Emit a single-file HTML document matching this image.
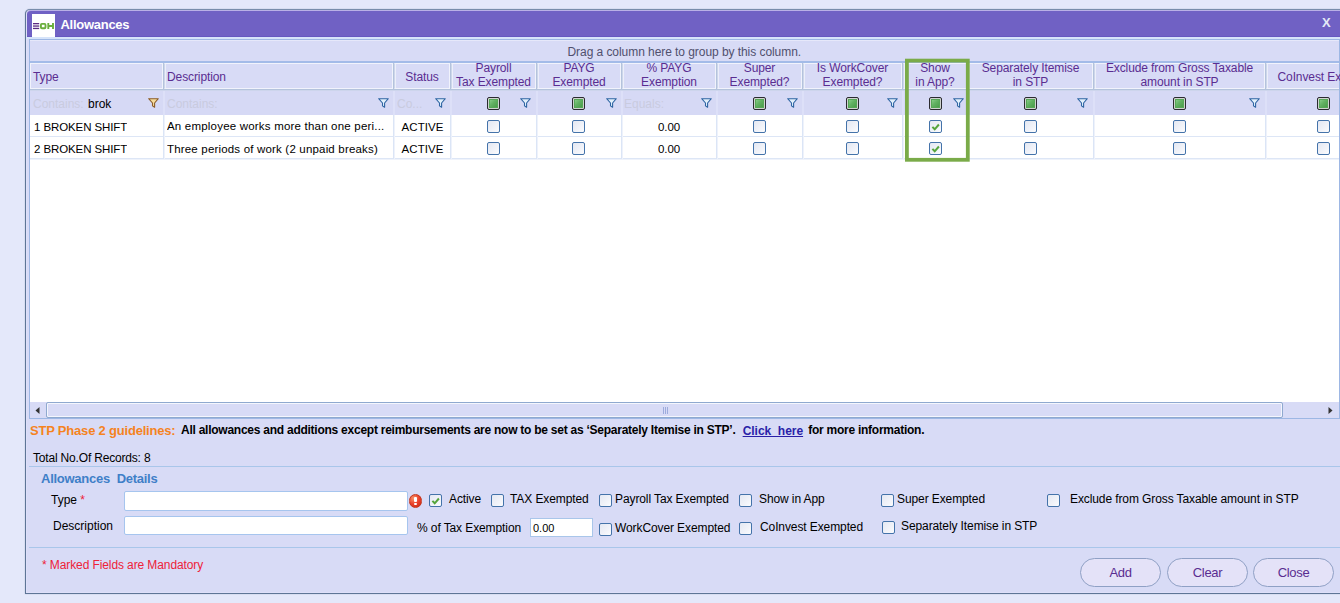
<!DOCTYPE html>
<html><head><meta charset="utf-8"><title>Allowances</title>
<style>
*{box-sizing:border-box;margin:0;padding:0}
html,body{width:1340px;height:603px;overflow:hidden}
body{background:#e4e8fa;font-family:"Liberation Sans",sans-serif;font-size:12px;color:#000;position:relative}
.abs{position:absolute}
#win{position:absolute;left:25px;top:9px;width:1320px;height:585px;border:1px solid #5e7596;border-top-color:#788dab;border-radius:5px 0 0 0;background:#d8dbf6;box-shadow:inset 0 0 0 1px #dee0f9,0 0 1px rgba(80,100,140,.7)}
#title{position:absolute;left:27px;top:10px;width:1316px;height:27px;background:#7061c4;border-radius:4px 0 0 0;border-top:1px solid #b9b0e6;border-bottom:1px solid #6558c0}
#tl{position:absolute;left:26px;top:37px;width:1314px;height:2px;background:#d6e4fa}
#title .t{position:absolute;left:33.5px;top:6px;font-size:13px;font-weight:bold;color:#fff;line-height:15px;letter-spacing:-0.28px}
#icon{position:absolute;left:32px;top:14px;width:23px;height:23px;background:#fff}
#grid{position:absolute;left:29px;top:39px;width:1311px;height:380px;border:1px solid #9db7e4;background:#fff}
#grp{position:absolute;left:30px;top:40px;width:1309px;height:21px;background:#d8dbf6;border-top:1px solid #e6e8fa;color:#50506e;line-height:23px;padding-left:537.5px;letter-spacing:-0.06px;white-space:nowrap;overflow:hidden}
#grpline{position:absolute;left:30px;top:61px;width:1309px;height:2px;background:#a3bbe8}
#hdr{position:absolute;left:30px;top:63px;width:1309px;height:28px;background:#b4c3dc;border-bottom:1px solid #cdd5ec}
.hc{position:absolute;top:63px;height:26px;border:1px solid #f1f3fc;border-left:1px solid #cdd6ea;box-shadow:inset 1px 0 0 #eceffa;color:#5a2d91;display:flex;flex-direction:column;justify-content:center;line-height:14px;white-space:nowrap;overflow:visible;letter-spacing:-0.1px;background:#d8dbf6}
.hc.c{text-align:center}
.hc.l{padding-left:2px}
#flt{position:absolute;left:30px;top:91px;width:1309px;height:24px;background:#d6d9f5}
.fc{position:absolute;top:92px;height:25px;line-height:25px;color:#c9cbdf;white-space:nowrap}
.fn{position:absolute;top:98px}
.row{position:absolute;left:30px;width:1309px;height:22px;background:#fff;border-bottom:1px solid #dde6f6;box-shadow:0 1px 0 #eff3fb}
.cell{position:absolute;height:22px;line-height:22px;white-space:nowrap;overflow:hidden;font-size:11.5px;letter-spacing:-0.1px}
.vs{position:absolute;top:115px;width:2px;height:44px;background:linear-gradient(90deg,#dbe5f6 0,#dbe5f6 50%,#eef2fb 50%,#eef2fb 100%)}
.fs{position:absolute;top:91px;width:2px;height:24px;background:#dde0f8}
.cb{position:absolute;width:13px;height:13px;border:1.35px solid #4473aa;border-radius:2px;background:linear-gradient(135deg,#e4e8f2 0%,#f1f3f9 60%,#fbfcfe 100%)}
.ib{position:absolute;width:13px;height:13px;border:1.2px solid #2b2b30;border-radius:2px;background:#cfd3cf}
.ib i{position:absolute;left:0.8px;top:0.8px;width:9px;height:9px;background:linear-gradient(135deg,#86cb86 0%,#62b162 45%,#4c9e4c 100%);border:1px solid #57a757}
</style></head><body>
<div id="win"></div>
<div id="title"><span class="t">Allowances</span></div>
<div id="tl"></div>
<div id="icon"><svg width="23" height="23" viewBox="0 0 23 23"><g fill="#5b2a82"><rect x="1" y="9" width="6.2" height="1.3"/><rect x="1" y="11.4" width="6.2" height="1.3"/><rect x="1" y="13.8" width="6.2" height="1.3"/></g><g fill="none" stroke="#6aae3c" stroke-width="1.9"><rect x="8.9" y="9.9" width="4.6" height="4.3" rx="1"/><path d="M16.3 9 V15.1 M21 9 V15.1 M16.3 12 H21"/></g></svg></div>
<div style="position:absolute;left:1322px;top:15px;color:#e4e9f6;font-size:13px;font-weight:bold;line-height:15px;width:30px">X</div>
<div id="grid"></div>
<div id="grp">Drag a column here to group by this column.</div>
<div id="grpline"></div>
<div id="hdr"></div>

<div class="hc l" style="left:30px;width:133px;border-left-color:#f1f3fc;box-shadow:none"><span style="position:relative;top:1px">Type</span></div>
<div class="hc l" style="left:164px;width:229px"><span style="position:relative;top:1px">Description</span></div>
<div class="hc c" style="left:394px;width:56px"><span style="position:relative;top:1px">Status</span></div>
<div class="hc c" style="left:451px;width:85px"><span style="position:relative;top:-1px">Payroll<br>Tax Exempted</span></div>
<div class="hc c" style="left:537px;width:84px"><span style="position:relative;top:-1px">PAYG<br>Exempted</span></div>
<div class="hc c" style="left:622px;width:94px"><span style="position:relative;top:-1px">% PAYG<br>Exemption</span></div>
<div class="hc c" style="left:717px;width:85px"><span style="position:relative;top:-1px">Super<br>Exempted?</span></div>
<div class="hc c" style="left:803px;width:99px"><span style="position:relative;top:-1px">Is WorkCover<br>Exempted?</span></div>
<div class="hc c" style="left:903px;width:64px"><span style="position:relative;top:-1px">Show<br>in App?</span></div>
<div class="hc c" style="left:968px;width:125px"><span style="position:relative;top:-1px">Separately Itemise<br>in STP</span></div>
<div class="hc c" style="left:1094px;width:171px"><span style="position:relative;top:-1px">Exclude from Gross Taxable<br>amount in STP</span></div>
<div class="hc l" style="left:1266px;width:73px;padding-left:10.5px;border-right:none"><span style="position:relative;top:1px">CoInvest Exempted?</span></div>
<div id="flt"></div>
<div class="fc" style="left:33px">Contains:</div><div class="fc" style="left:88px;color:#000">brok</div>
<svg class="fn" style="left:148px" width="11" height="10" viewBox="0 0 11 10"><path d="M0.7 0.7 H10.3 L6.6 5 V9.3 L4.5 7.9 V5 Z" fill="#f6dc9c" stroke="#8c5c28" stroke-width="1.1" stroke-linejoin="round"/></svg>
<div class="fc" style="left:167px">Contains:</div>
<svg class="fn" style="left:378px" width="11" height="10" viewBox="0 0 11 10"><path d="M0.7 0.7 H10.3 L6.6 5 V9.3 L4.5 7.9 V5 Z" fill="#e3f1fc" stroke="#2f65a3" stroke-width="1.1" stroke-linejoin="round"/></svg>
<div class="fc" style="left:397px">Co...</div>
<svg class="fn" style="left:435px" width="11" height="10" viewBox="0 0 11 10"><path d="M0.7 0.7 H10.3 L6.6 5 V9.3 L4.5 7.9 V5 Z" fill="#e3f1fc" stroke="#2f65a3" stroke-width="1.1" stroke-linejoin="round"/></svg>
<div class="ib" style="left:487px;top:97px"><i></i></div>
<svg class="fn" style="left:520px" width="11" height="10" viewBox="0 0 11 10"><path d="M0.7 0.7 H10.3 L6.6 5 V9.3 L4.5 7.9 V5 Z" fill="#e3f1fc" stroke="#2f65a3" stroke-width="1.1" stroke-linejoin="round"/></svg>
<div class="ib" style="left:572px;top:97px"><i></i></div>
<svg class="fn" style="left:606px" width="11" height="10" viewBox="0 0 11 10"><path d="M0.7 0.7 H10.3 L6.6 5 V9.3 L4.5 7.9 V5 Z" fill="#e3f1fc" stroke="#2f65a3" stroke-width="1.1" stroke-linejoin="round"/></svg>
<div class="fc" style="left:624px">Equals:</div>
<svg class="fn" style="left:701px" width="11" height="10" viewBox="0 0 11 10"><path d="M0.7 0.7 H10.3 L6.6 5 V9.3 L4.5 7.9 V5 Z" fill="#e3f1fc" stroke="#2f65a3" stroke-width="1.1" stroke-linejoin="round"/></svg>
<div class="ib" style="left:753px;top:97px"><i></i></div>
<svg class="fn" style="left:787px" width="11" height="10" viewBox="0 0 11 10"><path d="M0.7 0.7 H10.3 L6.6 5 V9.3 L4.5 7.9 V5 Z" fill="#e3f1fc" stroke="#2f65a3" stroke-width="1.1" stroke-linejoin="round"/></svg>
<div class="ib" style="left:846px;top:97px"><i></i></div>
<svg class="fn" style="left:887px" width="11" height="10" viewBox="0 0 11 10"><path d="M0.7 0.7 H10.3 L6.6 5 V9.3 L4.5 7.9 V5 Z" fill="#e3f1fc" stroke="#2f65a3" stroke-width="1.1" stroke-linejoin="round"/></svg>
<div class="ib" style="left:929px;top:97px"><i></i></div>
<svg class="fn" style="left:953px" width="11" height="10" viewBox="0 0 11 10"><path d="M0.7 0.7 H10.3 L6.6 5 V9.3 L4.5 7.9 V5 Z" fill="#e3f1fc" stroke="#2f65a3" stroke-width="1.1" stroke-linejoin="round"/></svg>
<div class="ib" style="left:1024px;top:97px"><i></i></div>
<svg class="fn" style="left:1077px" width="11" height="10" viewBox="0 0 11 10"><path d="M0.7 0.7 H10.3 L6.6 5 V9.3 L4.5 7.9 V5 Z" fill="#e3f1fc" stroke="#2f65a3" stroke-width="1.1" stroke-linejoin="round"/></svg>
<div class="ib" style="left:1173px;top:97px"><i></i></div>
<svg class="fn" style="left:1249px" width="11" height="10" viewBox="0 0 11 10"><path d="M0.7 0.7 H10.3 L6.6 5 V9.3 L4.5 7.9 V5 Z" fill="#e3f1fc" stroke="#2f65a3" stroke-width="1.1" stroke-linejoin="round"/></svg>
<div class="ib" style="left:1317px;top:97px"><i></i></div>
<div class="row" style="top:115px"></div>
<div class="cell" style="left:34px;top:115.5px">1 BROKEN SHIFT</div>
<div class="cell" style="left:167px;top:114.6px;width:226px;letter-spacing:0.2px">An employee works more than one peri...</div>
<div class="cell" style="left:394px;top:115.5px;width:57px;text-align:center;letter-spacing:0.05px">ACTIVE</div>
<div class="cell" style="left:622px;top:115.5px;width:94px;text-align:center">0.00</div>
<div class="cb" style="left:487px;top:120px"></div>
<div class="cb" style="left:572px;top:120px"></div>
<div class="cb" style="left:753px;top:120px"></div>
<div class="cb" style="left:846px;top:120px"></div>
<div class="cb" style="left:929px;top:120px"><svg style="position:absolute;left:1px;top:1px" width="9" height="9" viewBox="0 0 9 9"><path d="M1.4 4.9 L3.7 7.3 L7.9 2.5" fill="none" stroke="#55a53c" stroke-width="2"/></svg></div>
<div class="cb" style="left:1024px;top:120px"></div>
<div class="cb" style="left:1173px;top:120px"></div>
<div class="cb" style="left:1317px;top:120px"></div>
<div class="row" style="top:137px"></div>
<div class="cell" style="left:34px;top:137.5px">2 BROKEN SHIFT</div>
<div class="cell" style="left:167px;top:137.6px;width:226px;letter-spacing:0.18px">Three periods of work (2 unpaid breaks)</div>
<div class="cell" style="left:394px;top:137.5px;width:57px;text-align:center;letter-spacing:0.05px">ACTIVE</div>
<div class="cell" style="left:622px;top:137.5px;width:94px;text-align:center">0.00</div>
<div class="cb" style="left:487px;top:142px"></div>
<div class="cb" style="left:572px;top:142px"></div>
<div class="cb" style="left:753px;top:142px"></div>
<div class="cb" style="left:846px;top:142px"></div>
<div class="cb" style="left:929px;top:142px"><svg style="position:absolute;left:1px;top:1px" width="9" height="9" viewBox="0 0 9 9"><path d="M1.4 4.9 L3.7 7.3 L7.9 2.5" fill="none" stroke="#55a53c" stroke-width="2"/></svg></div>
<div class="cb" style="left:1024px;top:142px"></div>
<div class="cb" style="left:1173px;top:142px"></div>
<div class="cb" style="left:1317px;top:142px"></div>
<div class="vs" style="left:163px"></div><div class="fs" style="left:163px"></div>
<div class="vs" style="left:393px"></div><div class="fs" style="left:393px"></div>
<div class="vs" style="left:450px"></div><div class="fs" style="left:450px"></div>
<div class="vs" style="left:536px"></div><div class="fs" style="left:536px"></div>
<div class="vs" style="left:621px"></div><div class="fs" style="left:621px"></div>
<div class="vs" style="left:716px"></div><div class="fs" style="left:716px"></div>
<div class="vs" style="left:802px"></div><div class="fs" style="left:802px"></div>
<div class="vs" style="left:902px"></div><div class="fs" style="left:902px"></div>
<div class="vs" style="left:967px"></div><div class="fs" style="left:967px"></div>
<div class="vs" style="left:1093px"></div><div class="fs" style="left:1093px"></div>
<div class="vs" style="left:1265px"></div><div class="fs" style="left:1265px"></div>
<svg style="position:absolute;left:900px;top:55px" width="80" height="112" viewBox="0 0 80 112"><rect x="6.9" y="5.6" width="60.9" height="99.2" fill="none" stroke="#7aab49" stroke-width="3.8"/></svg>

<!-- scrollbar -->
<div style="position:absolute;left:30px;top:402px;width:1309px;height:16px;background:#d8dbf6"></div>
<div style="position:absolute;left:46px;top:402px;width:1237px;height:16px;background:#d8dbf6;border:1px solid #8fa9cf;border-radius:2px;box-shadow:inset 0 0 0 1px #f4f6fd"></div>
<div style="position:absolute;left:663px;top:407px;width:5px;height:7px;border-left:1px solid #9dabdc;border-right:1px solid #9dabdc"><div style="position:absolute;left:1px;top:0;width:1px;height:7px;background:#9dabdc"></div></div>
<svg style="position:absolute;left:35px;top:407px" width="5" height="7" viewBox="0 0 5 7"><path d="M4.5 0 V7 L0.5 3.5 Z" fill="#333"/></svg>
<svg style="position:absolute;left:1328px;top:407px" width="5" height="7" viewBox="0 0 5 7"><path d="M0.5 0 V7 L4.5 3.5 Z" fill="#333"/></svg>

<div class="abs" style="left:30px;top:422.5px;font-size:13px;font-weight:bold;color:#f5831f;line-height:16px;white-space:nowrap;letter-spacing:-0.2px">STP Phase 2 guidelines:</div>
<div class="abs" style="left:181px;top:423px;font-size:12px;font-weight:bold;color:#000;line-height:14px;white-space:nowrap;letter-spacing:-0.25px">All allowances and additions except reimbursements are now to be set as &lsquo;Separately Itemise in STP&rsquo;. <span style="color:#2a1fa8;text-decoration:underline;font-size:12px;margin:0 2px 0 4px;letter-spacing:-0.02px;position:relative;top:0.5px">Click&nbsp; here</span> for more information.</div>
<div class="abs" style="left:33px;top:451px;line-height:14px;white-space:nowrap;letter-spacing:-0.18px">Total No.Of Records: 8</div>
<div class="abs" style="left:29px;top:466px;width:1311px;height:1px;background:#a9c6ea"></div>
<div class="abs" style="left:41px;top:471px;font-size:13px;font-weight:bold;color:#3f7fc8;line-height:16px;white-space:nowrap;letter-spacing:-0.26px">Allowances&nbsp; Details</div>

<div class="abs" style="left:51px;top:493px;line-height:14px;white-space:nowrap">Type <span style="color:#ee2238">*</span></div>
<div class="abs" style="left:124px;top:491px;width:284px;height:20px;background:#fff;border:1px solid #a6c5ee;border-radius:2px"></div>
<div class="abs" style="left:53px;top:519px;line-height:14px;white-space:nowrap">Description</div>
<div class="abs" style="left:124px;top:516px;width:284px;height:19px;background:#fff;border:1px solid #a6c5ee;border-radius:2px"></div>

<div class="abs" style="left:408.7px;top:494px;width:13.5px;height:13.5px;border-radius:50%;background:radial-gradient(circle at 32% 28%,#f7956a 0%,#ea3f2a 50%,#c42a14 100%);border:1px solid #c4361c"><div style="position:absolute;left:4.5px;top:1.8px;width:2.6px;height:5.6px;background:#fff;border-radius:1px"></div><div style="position:absolute;left:4.5px;top:8.2px;width:2.6px;height:2.2px;background:#fff;border-radius:1px"></div></div>

<div class="cb" style="left:429px;top:494px"><svg style="position:absolute;left:1px;top:1px" width="9" height="9" viewBox="0 0 9 9"><path d="M1.4 4.9 L3.7 7.3 L7.9 2.5" fill="none" stroke="#55a53c" stroke-width="2"/></svg></div>
<div class="abs" style="left:449px;top:492px;line-height:14px;white-space:nowrap;letter-spacing:-0.1px">Active</div>
<div class="cb" style="left:491px;top:494px"></div>
<div class="abs" style="left:510px;top:492px;line-height:14px;white-space:nowrap;letter-spacing:-0.1px">TAX Exempted</div>
<div class="cb" style="left:599px;top:494px"></div>
<div class="abs" style="left:615px;top:492px;line-height:14px;white-space:nowrap;letter-spacing:-0.1px">Payroll Tax Exempted</div>
<div class="cb" style="left:739px;top:494px"></div>
<div class="abs" style="left:759px;top:492px;line-height:14px;white-space:nowrap;letter-spacing:-0.1px">Show in App</div>
<div class="cb" style="left:881px;top:494px"></div>
<div class="abs" style="left:897px;top:492px;line-height:14px;white-space:nowrap;letter-spacing:-0.1px">Super Exempted</div>
<div class="cb" style="left:1047px;top:494px"></div>
<div class="abs" style="left:1070px;top:492px;line-height:14px;white-space:nowrap;letter-spacing:-0.1px">Exclude from Gross Taxable amount in STP</div>
<div class="abs" style="left:417px;top:521px;line-height:14px;white-space:nowrap;letter-spacing:-0.1px">% of Tax Exemption</div>
<div class="abs" style="left:530px;top:518px;width:63px;height:19px;background:#fff;border:1px solid #a9c6ea;line-height:18px;padding-left:2px;font-size:11px">0.00</div>
<div class="cb" style="left:599px;top:523px"></div>
<div class="abs" style="left:615px;top:521px;line-height:14px;white-space:nowrap;letter-spacing:-0.1px">WorkCover Exempted</div>
<div class="cb" style="left:739px;top:522px"></div>
<div class="abs" style="left:760px;top:520px;line-height:14px;white-space:nowrap;letter-spacing:-0.1px">CoInvest Exempted</div>
<div class="cb" style="left:882px;top:521px"></div>
<div class="abs" style="left:901px;top:519px;line-height:14px;white-space:nowrap;letter-spacing:-0.1px">Separately Itemise in STP</div>

<div class="abs" style="left:29px;top:547px;width:1311px;height:1px;background:#a9c6ea"></div>
<div class="abs" style="left:42px;top:558px;color:#ee2238;line-height:14px;white-space:nowrap;letter-spacing:-0.1px">* Marked Fields are Mandatory</div>

<div class="abs" style="left:1080px;top:558px;width:81px;height:29px;border:1.4px solid #8fa0c5;border-radius:15px;background:#e4e2f8;color:#5a2d91;font-size:13px;line-height:27.5px;text-align:center;letter-spacing:-0.3px">Add</div>
<div class="abs" style="left:1167px;top:558px;width:81px;height:29px;border:1.4px solid #8fa0c5;border-radius:15px;background:#e4e2f8;color:#5a2d91;font-size:13px;line-height:27.5px;text-align:center;letter-spacing:-0.3px">Clear</div>
<div class="abs" style="left:1253px;top:558px;width:81px;height:29px;border:1.4px solid #8fa0c5;border-radius:15px;background:#e4e2f8;color:#5a2d91;font-size:13px;line-height:27.5px;text-align:center;letter-spacing:-0.3px">Close</div>
</body></html>
